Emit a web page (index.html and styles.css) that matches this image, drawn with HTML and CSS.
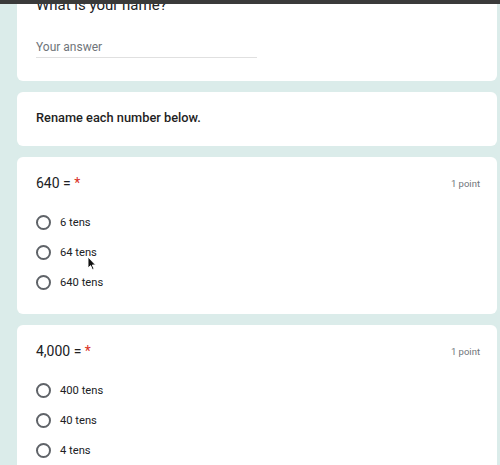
FILE: index.html
```html
<!DOCTYPE html>
<html lang="en">
<head>
    <meta charset="UTF-8">
    <meta name="viewport" content="width=device-width, initial-scale=1.0">
    <title>Rename each number</title>
    <link rel="stylesheet" href="styles.css">
</head>
<body>
    <div class="top-bar"></div>
    <div class="form">
        <div class="card card-first">
            <div class="question-title">What is your name?</div>
            <div class="answer-input">Your answer</div>
        </div>
        <div class="card card-text">
            <div class="section-text">Rename each number below.</div>
        </div>
        <div class="card card-question">
            <div class="question-head">
                <div class="question-title">640 = <span class="required">*</span></div>
                <div class="points">1 point</div>
            </div>
            <div class="options">
                <div class="option"><div class="radio"></div><span>6 tens</span></div>
                <div class="option option-hover"><div class="radio"></div><span>64 tens</span>
                    <svg class="cursor" width="10" height="15" viewBox="0 0 10 15">
                        <path d="M1 1 L1 12 L3.6 9.6 L5.4 13.6 L7 12.9 L5.3 9 L8.6 9 Z" fill="#111" stroke="#fff" stroke-width="0.9" stroke-linejoin="round"/>
                    </svg>
                </div>
                <div class="option"><div class="radio"></div><span>640 tens</span></div>
            </div>
        </div>
        <div class="card card-question">
            <div class="question-head">
                <div class="question-title">4,000 = <span class="required">*</span></div>
                <div class="points">1 point</div>
            </div>
            <div class="options">
                <div class="option"><div class="radio"></div><span>400 tens</span></div>
                <div class="option"><div class="radio"></div><span>40 tens</span></div>
                <div class="option"><div class="radio"></div><span>4 tens</span></div>
            </div>
        </div>
    </div>
</body>
</html>
```

FILE: styles.css
```css
body {
    margin: 0;
    background-color: #dbecea;
    font-family: Roboto, "Liberation Sans", sans-serif;
    color: #202124;
    height: 465px;
    overflow: hidden;
}
.top-bar {
    height: 4px;
    background-color: #3a3a3a;
    position: relative;
    z-index: 2;
}
.form {
    display: flex;
    flex-direction: column;
    gap: 11px;
    padding: 0 3px 0 17px;
}
.card {
    background-color: white;
    border-radius: 6px;
    padding: 16px 17px 17px 19px;
    overflow: hidden;
}
.card-text {
    padding-bottom: 18px;
}
.card-first {
    border-radius: 0 0 6px 6px;
    padding-top: 0;
    padding-bottom: 23px;
}
.card-first .question-title {
    margin-top: -9px;
    font-size: 15px;
}
.question-title {
    font-size: 14px;
    line-height: 20px;
}
.answer-input {
    margin-top: 24px;
    width: 221px;
    font-size: 12px;
    line-height: 16px;
    color: #70757a;
    padding-bottom: 2px;
    border-bottom: 1px solid #e0e0e0;
}
.section-text {
    font-size: 12.8px;
    font-weight: 500;
    line-height: 20px;
    color: #1f1f1f;
}
.question-head {
    display: flex;
    justify-content: space-between;
    align-items: center;
}
.required {
    color: #d93025;
}
.points {
    font-size: 9.5px;
    color: #70757a;
}
.options {
    margin-top: 14px;
}
.option {
    display: flex;
    align-items: center;
    gap: 9px;
    height: 30px;
    font-size: 11.2px;
    position: relative;
}
.radio {
    width: 11px;
    height: 11px;
    border: 2px solid #5f6368;
    border-radius: 50%;
    flex-shrink: 0;
}
.cursor {
    position: absolute;
    left: 51px;
    top: 19px;
}
```
